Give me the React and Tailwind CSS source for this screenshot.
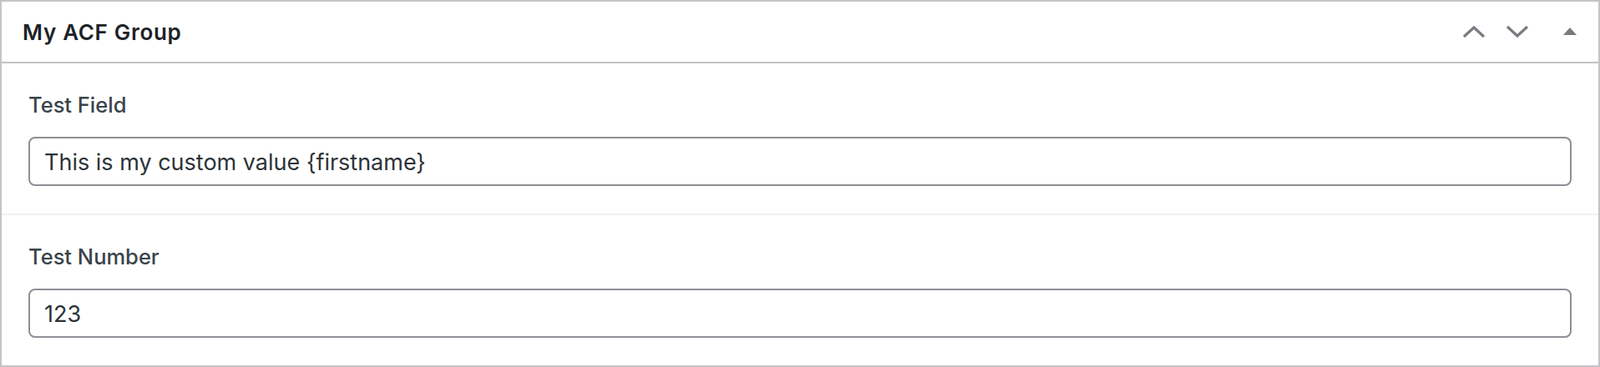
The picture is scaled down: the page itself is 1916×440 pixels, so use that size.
import React, { useState } from 'react';

const font = { fontFamily: 'Inter, "Noto Sans", "Liberation Sans", sans-serif' };

const ChevronUp = () => (
  <svg width="28" height="16" viewBox="0 0 28 16" fill="none">
    <polyline points="2,14 14,3 26,14" stroke="#787c82" strokeWidth="3.2" />
  </svg>
);

const ChevronDown = () => (
  <svg width="28" height="16" viewBox="0 0 28 16" fill="none">
    <polyline points="2,2 14,13 26,2" stroke="#787c82" strokeWidth="3.2" />
  </svg>
);

const Triangle = () => (
  <svg width="16" height="9" viewBox="0 0 16 9">
    <polygon points="8,0 16,9 0,9" fill="#787c82" />
  </svg>
);

const Field = ({ label, value, onChange, last }) => (
  <div className={`px-[32px] pt-[35px] ${last ? 'pb-[32px]' : 'pb-[33px] border-b-2 border-[#f0f0f1]'}`}>
    <label className="block text-[25.5px] leading-[30px] font-medium text-[#3c434a]">{label}</label>
    <input
      className="mt-[23px] block w-full h-[59px] px-[17px] pt-[1px] border-2 border-[#8c8f94] rounded-[8px] text-[27px] text-[#2c3338] outline-none bg-white"
      style={font}
      value={value}
      onChange={e => onChange(e.target.value)}
    />
  </div>
);

export default function App() {
  const [text, setText] = useState('This is my custom value {firstname}');
  const [num, setNum] = useState('123');

  return (
    <div className="w-[1916px] h-[440px] bg-white" style={font}>
      <div className="h-full border-2 border-[#c3c4c7] bg-white">
        {/* header */}
        <div className="h-[74px] flex items-center justify-between border-b-2 border-[#c3c4c7] pl-[25px] pr-[26px]">
          <h2 className="text-[26px] font-semibold tracking-[0.7px] text-[#1d2327]">My ACF Group</h2>
          <div className="flex items-center">
            <ChevronUp />
            <div className="ml-[24px]"><ChevronDown /></div>
            <div className="ml-[41px] mb-[2px]"><Triangle /></div>
          </div>
        </div>

        <Field label="Test Field" value={text} onChange={setText} />
        <Field label="Test Number" value={num} onChange={setNum} last />
      </div>
    </div>
  );
}
